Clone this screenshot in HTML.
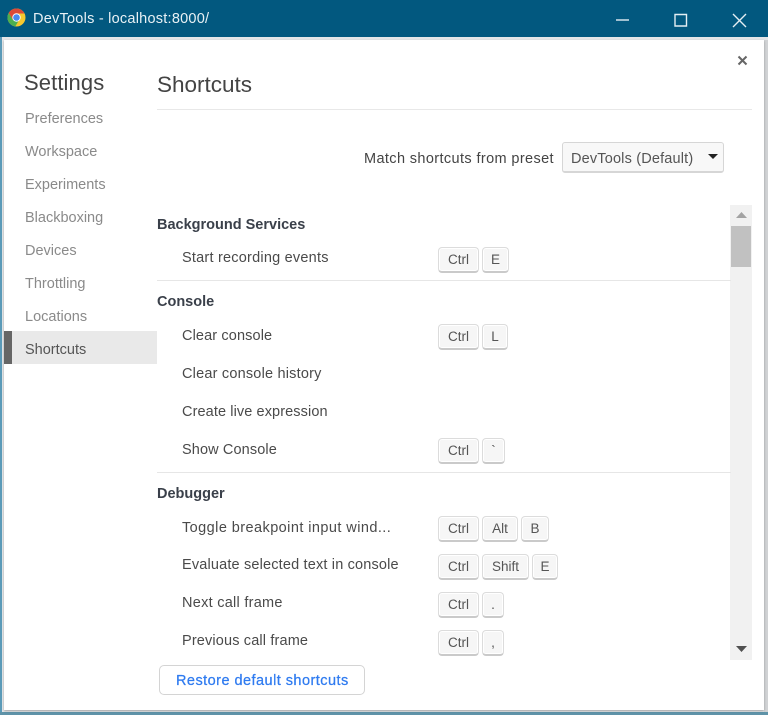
<!DOCTYPE html>
<html lang="en"><head><meta charset="utf-8"><title>DevTools - localhost:8000/</title>
<style>
html,body{margin:0;padding:0;width:768px;height:715px;overflow:hidden;background:#fff}
body{position:relative;font-family:"Liberation Sans",sans-serif;color:#444}
.a{position:absolute;white-space:nowrap}
.nav{left:25px;font-size:14.5px;line-height:20px;color:#8a8a8a}
.h{left:157px;font-size:14.5px;line-height:20px;font-weight:bold;color:#3a404a}
.r{left:182px;font-size:14.5px;line-height:20px;color:#4a4a4a;letter-spacing:.17px}
.k{position:absolute;height:26px;box-sizing:border-box;border:1px solid #dcdcdc;border-bottom:2px solid #cacaca;border-radius:4px;background:#f6f6f6;box-shadow:inset 0 0 0 1px #fff;font-size:13.5px;line-height:23px;text-align:center;color:#555}
.ln{position:absolute;left:157px;width:574px;height:1px;background:#e6e6e6}
</style></head><body>
<div class="a" style="left:0;top:0;width:768px;height:37px;background:#02587f"></div>
<div class="a" style="left:0;top:37px;width:768px;height:678px;background:#e4e6e8"></div>
<div class="a" style="left:0;top:37px;width:2px;height:678px;background:#5b9ab8"></div>
<div class="a" style="left:0;top:712px;width:768px;height:3px;background:#5f93a8"></div>
<div class="a" style="left:764px;top:40px;width:4px;height:672px;background:#d0d2d4"></div>
<div class="a" style="left:4px;top:40px;width:760px;height:670px;background:#fff;box-shadow:0 1px 2px rgba(0,0,0,.3)"></div>

<svg class="a" style="left:7px;top:8px" width="19" height="19" viewBox="0 0 19 19">
<circle cx="9.500" cy="9.500" r="9" fill="#f6c92e"/>
<path d="M9.500 .5A9 9 0 0 0 1.700 5L5.700 11.700 9.500 5.500H17.400A9 9 0 0 0 9.500 .5Z" fill="#dc4a38"/>
<path d="M1.700 5A9 9 0 0 0 8.300 18.400L11.500 13 5.700 11.700Z" fill="#4caf50"/>
<circle cx="9.500" cy="9.500" r="4.200" fill="#fff"/><circle cx="9.500" cy="9.500" r="3.300" fill="#4a8af0"/>
</svg>
<div class="a" style="left:33px;top:10px;font-size:14.5px;line-height:18px;color:#e8f1f5;letter-spacing:.24px">DevTools - localhost:8000/</div>
<svg class="a" style="left:610px;top:8px" width="150" height="24" viewBox="0 0 150 24" fill="none" stroke="#e4eef3" stroke-width="1.400">
<path d="M6 12H19"/><path d="M65 6.500H76.500V18H65Z"/><path d="M123 6L136 19M136 6L123 19"/></svg>

<div class="a" style="left:24px;top:69px;font-size:22px;line-height:27px;color:#444;letter-spacing:.1px">Settings</div>
<div class="a nav" style="top:109px">Preferences</div>
<div class="a nav" style="top:142px">Workspace</div>
<div class="a nav" style="top:175px">Experiments</div>
<div class="a nav" style="top:208px">Blackboxing</div>
<div class="a nav" style="top:241px">Devices</div>
<div class="a nav" style="top:274px">Throttling</div>
<div class="a nav" style="top:307px">Locations</div>
<div class="a" style="left:4px;top:331px;width:153px;height:33px;background:#e9e9e9"></div>
<div class="a" style="left:4px;top:331px;width:8px;height:33px;background:#666"></div>
<div class="a nav" style="top:340px;color:#555">Shortcuts</div>

<div class="a" style="left:157px;top:71px;font-size:22.5px;line-height:28px;color:#444">Shortcuts</div>
<div class="a" style="left:157px;top:109px;width:595px;height:1px;background:#e8e8e8"></div>
<svg class="a" style="left:737px;top:55px" width="11" height="11" viewBox="0 0 11 11"><path d="M1.500 1.500L9.500 9.500M9.500 1.500L1.500 9.500" stroke="#666" stroke-width="2"/></svg>

<div class="a" style="left:364px;top:149px;font-size:14.5px;line-height:20px;color:#444;letter-spacing:.38px">Match shortcuts from preset</div>
<div class="a" style="left:562px;top:142px;width:162px;height:31px;box-sizing:border-box;border:1px solid #d6d6d6;border-bottom:2px solid #d6d6d6;border-radius:3px;background:#f8f8f8"></div>
<div class="a" style="left:571px;top:149px;font-size:14.5px;line-height:20px;color:#555;letter-spacing:.17px">DevTools (Default)</div>
<svg class="a" style="left:708px;top:154px" width="10" height="6"><path d="M0 0H10L5 5Z" fill="#222"/></svg>

<div class="a" style="left:730px;top:205px;width:22px;height:455px;background:#f1f1f1"></div>
<div class="a" style="left:731px;top:226px;width:20px;height:41px;background:#c1c1c1"></div>
<svg class="a" style="left:736px;top:211px" width="11" height="8"><path d="M0 7H11L5.500 1Z" fill="#a3a3a3"/></svg>
<svg class="a" style="left:736px;top:645px" width="11" height="8"><path d="M0 1H11L5.500 7Z" fill="#505050"/></svg>

<div class="a h" style="top:215px">Background Services</div>
<div class="a r" style="top:248px;letter-spacing:.22px">Start recording events</div>
<div class="k" style="left:438px;top:247px;width:41px">Ctrl</div><div class="k" style="left:482px;top:247px;width:27px">E</div>
<div class="ln" style="top:280px"></div>

<div class="a h" style="top:292px">Console</div>
<div class="a r" style="top:326px;letter-spacing:.12px">Clear console</div>
<div class="k" style="left:438px;top:324px;width:41px">Ctrl</div><div class="k" style="left:482px;top:324px;width:26px">L</div>
<div class="a r" style="top:364px;letter-spacing:.2px">Clear console history</div>
<div class="a r" style="top:402px;letter-spacing:.1px">Create live expression</div>
<div class="a r" style="top:440px;letter-spacing:.12px">Show Console</div>
<div class="k" style="left:438px;top:438px;width:41px">Ctrl</div><div class="k" style="left:482px;top:438px;width:23px">`</div>
<div class="ln" style="top:472px"></div>

<div class="a h" style="top:484px">Debugger</div>
<div class="a r" style="top:518px;letter-spacing:.43px">Toggle breakpoint input wind...</div>
<div class="k" style="left:438px;top:516px;width:41px">Ctrl</div><div class="k" style="left:482px;top:516px;width:36px">Alt</div><div class="k" style="left:521px;top:516px;width:28px">B</div>
<div class="a r" style="top:555px">Evaluate selected text in console</div>
<div class="k" style="left:438px;top:554px;width:41px">Ctrl</div><div class="k" style="left:482px;top:554px;width:47px">Shift</div><div class="k" style="left:532px;top:554px;width:26px">E</div>
<div class="a r" style="top:593px;letter-spacing:.27px">Next call frame</div>
<div class="k" style="left:438px;top:592px;width:41px">Ctrl</div><div class="k" style="left:482px;top:592px;width:22px">.</div>
<div class="a r" style="top:631px;letter-spacing:.15px">Previous call frame</div>
<div class="k" style="left:438px;top:630px;width:41px">Ctrl</div><div class="k" style="left:482px;top:630px;width:22px">,</div>

<div class="a" style="left:159px;top:665px;width:206px;height:30px;box-sizing:border-box;border:1px solid #d4d4d4;border-radius:5px;background:#fff"></div>
<div class="a" style="left:176px;top:671px;font-size:14.5px;line-height:20px;color:#2f7bf0;letter-spacing:.46px;-webkit-text-stroke:.25px #2f7bf0">Restore default shortcuts</div>
</body></html>
